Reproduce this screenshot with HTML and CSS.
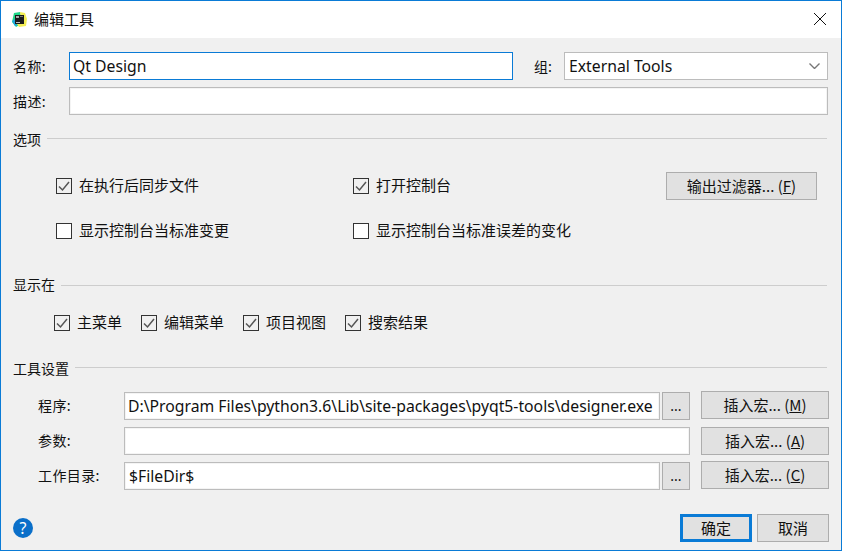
FILE: index.html
```html
<!DOCTYPE html>
<html lang="zh">
<head>
<meta charset="utf-8">
<title>编辑工具</title>
<link rel="stylesheet" href="styles.css">
</head>
<body>
<div class="window">
  <header class="titlebar">
    <svg class="app-icon" width="15" height="15" viewBox="0 0 15 15">
      <path d="M2 1 L8 0 L9 3 L9 12 L4 15 L0 10 Z" fill="#21d789"/>
      <path d="M0 9 L3 14 L5 14 L3 7 Z" fill="#1fa8e0"/>
      <path d="M8 0 L13 1 L15 7 L14 14 L7 15 L5 12 L9 9 Z" fill="#f4ee55"/>
      <rect x="3" y="3" width="9" height="9" fill="#1b1b1b"/>
      <rect x="4" y="4" width="3" height="2" fill="#aaa"/>
      <rect x="8" y="4" width="3" height="1" fill="#777"/>
      <rect x="4" y="10" width="4" height="1" fill="#bbb"/>
    </svg>
    <span class="title">编辑工具</span>
    <svg class="close" width="12" height="12" viewBox="0 0 12 12"><path d="M0 0 L12 12 M12 0 L0 12" stroke="#111" stroke-width="1" fill="none"/></svg>
  </header>
  <main class="content">
    <div class="row row-name">
      <label class="lbl lbl-top">名称:</label>
      <input class="field field-focus field-name" value="Qt Design">
      <label class="lbl lbl-group">组:</label>
      <div class="combo"><span>External Tools</span>
        <svg width="11" height="6" viewBox="0 0 11 6"><path d="M0.5 0.5 L5.5 5.5 L10.5 0.5" stroke="#777" stroke-width="1.4" fill="none"/></svg>
      </div>
    </div>
    <div class="row row-desc">
      <label class="lbl lbl-top">描述:</label>
      <input class="field field-desc">
    </div>

    <div class="section sec-options"><span>选项</span><i></i></div>
    <div class="opts">
      <label class="check"><span class="box on"><svg width="14" height="14" viewBox="0 0 14 14"><path d="M2 7.5 L5.5 11 L12 3" stroke="#555" stroke-width="1.5" fill="none"/></svg></span>在执行后同步文件</label>
      <label class="check"><span class="box on"><svg width="14" height="14" viewBox="0 0 14 14"><path d="M2 7.5 L5.5 11 L12 3" stroke="#555" stroke-width="1.5" fill="none"/></svg></span>打开控制台</label>
      <button class="btn btn-filter">输出过滤器... (<u>F</u>)</button>
      <label class="check"><span class="box"></span>显示控制台当标准变更</label>
      <label class="check"><span class="box"></span>显示控制台当标准误差的变化</label>
    </div>

    <div class="section sec-show"><span>显示在</span><i></i></div>
    <div class="shows">
      <label class="check w87"><span class="box on"><svg width="14" height="14" viewBox="0 0 14 14"><path d="M2 7.5 L5.5 11 L12 3" stroke="#555" stroke-width="1.5" fill="none"/></svg></span>主菜单</label>
      <label class="check w102"><span class="box on"><svg width="14" height="14" viewBox="0 0 14 14"><path d="M2 7.5 L5.5 11 L12 3" stroke="#555" stroke-width="1.5" fill="none"/></svg></span>编辑菜单</label>
      <label class="check w102"><span class="box on"><svg width="14" height="14" viewBox="0 0 14 14"><path d="M2 7.5 L5.5 11 L12 3" stroke="#555" stroke-width="1.5" fill="none"/></svg></span>项目视图</label>
      <label class="check"><span class="box on"><svg width="14" height="14" viewBox="0 0 14 14"><path d="M2 7.5 L5.5 11 L12 3" stroke="#555" stroke-width="1.5" fill="none"/></svg></span>搜索结果</label>
    </div>

    <div class="section sec-tools"><span>工具设置</span><i></i></div>
    <div class="tools">
      <label class="tool-lbl">程序:</label>
      <div class="tool-input"><input class="field grow" value="D:\Program Files\python3.6\Lib\site-packages\pyqt5-tools\designer.exe"><button class="btn dots">...</button></div>
      <button class="btn macro up1">插入宏... (<u>M</u>)</button>

      <label class="tool-lbl">参数:</label>
      <div class="tool-input"><input class="field grow"></div>
      <button class="btn macro">插入宏... (<u>A</u>)</button>

      <label class="tool-lbl">工作目录:</label>
      <div class="tool-input"><input class="field grow field-pad" value="$FileDir$"><button class="btn dots">...</button></div>
      <button class="btn macro up1">插入宏... (<u>C</u>)</button>
    </div>

    <footer class="footer">
      <span class="help">?</span>
      <button class="btn dlg default">确定</button>
      <button class="btn dlg">取消</button>
    </footer>
  </main>
</div>
</body>
</html>
```
FILE: styles.css
```css
* { box-sizing: border-box; }
html, body { margin: 0; padding: 0; }
body {
  width: 842px; height: 551px; overflow: hidden;
  font-family: "Noto Sans", "Noto Sans CJK SC", sans-serif;
  font-size: 14px; color: #111;
}
.window {
  width: 842px; height: 551px;
  border: 1px solid #0a7bd6;
  display: flex; flex-direction: column;
  background: #f0f0f0;
}
.titlebar {
  height: 37px; flex: none; background: #fff;
  display: flex; align-items: center;
  padding-left: 11px; padding-right: 15px;
}
.app-icon { flex: none; }
.title { margin-left: 7px; margin-bottom: 1px; font-family: "Noto Sans CJK SC", sans-serif; font-size: 15px; line-height: 20px; }
.close { margin-left: auto; margin-bottom: 1px; }
.content { flex: 1; padding: 14px 12px 0 12px; display: flex; flex-direction: column; }
.row { display: flex; align-items: center; }
.lbl { font-family: "Noto Sans CJK SC", sans-serif; font-size: 14px; line-height: 20px; white-space: nowrap; }
.lbl-top { width: 56px; flex: none; letter-spacing: 0.4px; }
.field {
  height: 28px; border: 1px solid #bcbcbc; background: #fff;
  font: 15.75px "Noto Sans", "Noto Sans CJK SC", sans-serif;
  padding: 0 3px; color: #111; outline: none; border-radius: 0;
  box-shadow: inset 0 0 0 1px #f4f4f4;
}
.field-focus { border-color: #0a7bd6; box-shadow: none; }
.field-name { width: 444px; flex: none; }
.field-pad { padding-left: 4px; }
.lbl-group { width: 51px; flex: none; padding-left: 21px; }
.combo {
  width: 264px; height: 28px; flex: none; background: #fff;
  border: 1px solid #bcbcbc;
  display: flex; align-items: center; justify-content: space-between;
  padding: 0 7px 0 4px; font-size: 15.75px;
}
.row-desc { margin-top: 7px; }
.field-desc { width: 759px; flex: none; }

.section { display: flex; align-items: center; height: 20px; flex: none; font-family: "Noto Sans CJK SC", sans-serif; font-size: 14px; line-height: 20px; padding-right: 2px; }
.section i { flex: 1; height: 1px; background: #cdcdcd; margin-left: 6px; margin-top: -3px; }
.section span { margin-top: -2px; }
.sec-options { margin-top: 15px; }
.sec-show { margin-top: 30px; }
.sec-show i { margin-top: 1px; }
.sec-tools { margin-top: 25px; }
.sec-tools span { margin-top: 0; }
.sec-tools i { margin-top: -1px; }

.opts {
  display: grid; grid-template-columns: 297px 313px 151px;
  grid-template-rows: 28px 28px; row-gap: 17px; align-items: center;
  margin-top: 22px; padding-left: 43px;
}
.opts .btn-filter { grid-row: 1; grid-column: 3; }
.check {
  display: flex; align-items: center; white-space: nowrap; padding-bottom: 2px;
  font-family: "Noto Sans CJK SC", sans-serif; font-size: 15px; line-height: 20px; color: #111;
}
.box {
  width: 16px; height: 16px; flex: none; border: 1px solid #333; background: #fff;
  margin-right: 7px; margin-top: 2px; display: flex; align-items: center; justify-content: center;
}
.box.on { background: #f0f0f0; }
.shows { display: flex; margin-top: 18px; padding-left: 41px; height: 20px; align-items: center; }
.w87 { width: 87px; }
.w102 { width: 102px; }

.btn {
  background: #e1e1e1; border: 1px solid #adadad; color: #111; padding: 0; border-radius: 0;
  font-family: "Noto Sans CJK SC", "Noto Sans", sans-serif; font-size: 15px; line-height: 20px; white-space: nowrap;
}
.btn-filter { width: 151px; height: 28px; }
.tools {
  display: grid; grid-template-columns: 86px 566px 139px;
  grid-auto-rows: 28px; row-gap: 7px; margin-top: 14px; padding-left: 25px; align-items: center;
}
.tool-lbl { font-family: "Noto Sans CJK SC", sans-serif; font-size: 14px; line-height: 20px; letter-spacing: 0.4px; margin-bottom: 2px; }
.tool-input { display: flex; width: 566px; height: 28px; }
.grow { flex: 1; min-width: 0; }
.dots { width: 28px; height: 28px; margin-left: 2px; flex: none; font-family: "Noto Sans", sans-serif; font-size: 14px; }
.macro { width: 128px; height: 28px; margin-left: 11px; justify-self: start; }
.up1 { position: relative; top: -1px; }

.footer { display: flex; align-items: center; margin-top: 24px; height: 28px; }
.help {
  width: 20px; height: 20px; border-radius: 50%; background: #0a6fc9; color: #fff;
  display: flex; align-items: center; justify-content: center;
  font-family: "Noto Sans", sans-serif; font-size: 16px;
}
.dlg { width: 72px; height: 28px; }
.default { margin-left: auto; margin-right: 5px; border: 3px solid #0a7bd6; }
```
